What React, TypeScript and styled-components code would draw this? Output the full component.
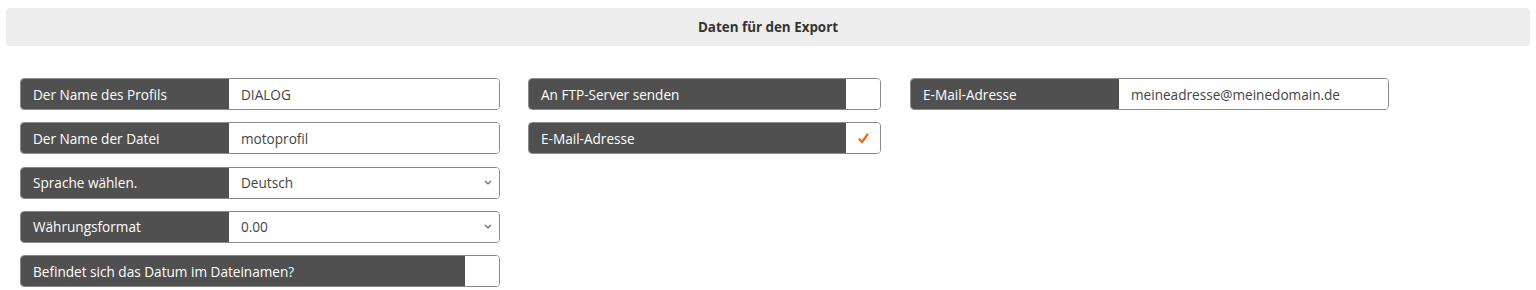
import React from "react";
import styled, { createGlobalStyle } from "styled-components";

const GlobalStyle = createGlobalStyle`
  body {
    margin: 0;
    font-family: "Open Sans", "Liberation Sans", sans-serif;
    background: #ffffff;
  }
`;

const Page = styled.div`
  padding: 8px 6px 0 6px;
`;

const Header = styled.div`
  height: 38px;
  background: #ededed;
  border-radius: 4px;
  display: flex;
  align-items: center;
  justify-content: center;
  font-size: 13.4px;
  font-weight: 700;
  color: #333;
`;

const Columns = styled.div`
  display: flex;
  align-items: flex-start;
  padding: 32px 0 0 14px;
`;

const Column = styled.div<{ $width: number; $gap: number }>`
  width: ${(p) => p.$width}px;
  margin-right: ${(p) => p.$gap}px;
  display: flex;
  flex-direction: column;
  gap: 12.25px;
`;

const Row = styled.div`
  display: flex;
  height: 32px;
  box-sizing: border-box;
  border: 1px solid #8a8a8a;
  border-radius: 4px;
  overflow: hidden;
  font-size: 13.6px;
`;

const Label = styled.div<{ $width?: number }>`
  ${(p) => (p.$width ? `width: ${p.$width}px;` : "flex: 1;")}
  flex-shrink: 0;
  background: #505050;
  color: #fff;
  display: flex;
  align-items: center;
  padding-left: 12px;
  box-sizing: border-box;
`;

const Value = styled.div`
  flex: 1;
  background: #fff;
  color: #444;
  display: flex;
  align-items: center;
  justify-content: space-between;
  padding: 0 7px 0 12px;
`;

const Check = styled.div`
  width: 34px;
  flex-shrink: 0;
  background: #fff;
  display: flex;
  align-items: center;
  justify-content: center;
`;

const Chevron = () => (
  <svg width="8" height="5" viewBox="0 0 8 5">
    <path d="M1 1l3 3 3-3" fill="none" stroke="#666" strokeWidth="1.2" />
  </svg>
);

const Tick = () => (
  <svg width="11" height="11" viewBox="0 0 11 11">
    <path
      d="M1.6 6.4L4 9 9.4 1.6"
      fill="none"
      stroke="#ee6a14"
      strokeWidth="2.4"
      strokeLinecap="round"
      strokeLinejoin="round"
    />
  </svg>
);

export default function App() {
  return (
    <>
      <GlobalStyle />
      <Page>
        <Header>Daten für den Export</Header>
        <Columns>
          <Column $width={480} $gap={28}>
            <Row>
              <Label $width={208}>Der Name des Profils</Label>
              <Value>DIALOG</Value>
            </Row>
            <Row>
              <Label $width={208}>Der Name der Datei</Label>
              <Value>motoprofil</Value>
            </Row>
            <Row>
              <Label $width={208}>Sprache wählen.</Label>
              <Value>
                Deutsch
                <Chevron />
              </Value>
            </Row>
            <Row>
              <Label $width={208}>Währungsformat</Label>
              <Value>
                0.00
                <Chevron />
              </Value>
            </Row>
            <Row>
              <Label>Befindet sich das Datum im Dateinamen?</Label>
              <Check />
            </Row>
          </Column>
          <Column $width={353} $gap={29}>
            <Row>
              <Label>An FTP-Server senden</Label>
              <Check />
            </Row>
            <Row>
              <Label>E-Mail-Adresse</Label>
              <Check>
                <Tick />
              </Check>
            </Row>
          </Column>
          <Column $width={479} $gap={0}>
            <Row>
              <Label $width={208}>E-Mail-Adresse</Label>
              <Value>meineadresse@meinedomain.de</Value>
            </Row>
          </Column>
        </Columns>
      </Page>
    </>
  );
}
